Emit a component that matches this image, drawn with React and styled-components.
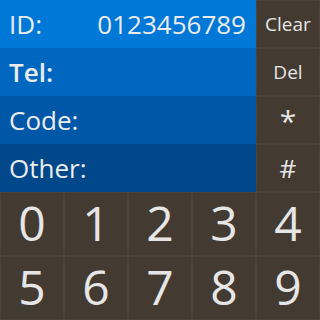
import React from "react";
import styled, { createGlobalStyle } from "styled-components";

const Global = createGlobalStyle`
  html, body { margin: 0; padding: 0; background: #433a31; }
  body { font-family: "Open Sans", "Noto Sans", sans-serif; }
`;

const Screen = styled.div`
  width: 320px;
  height: 320px;
  display: grid;
  grid-template-columns: 256px 64px;
  grid-template-rows: 192px 128px;
  background: #433a31;
  overflow: hidden;
`;

const Fields = styled.div`
  display: flex;
  flex-direction: column;
`;

const Field = styled.div`
  height: 48px;
  display: flex;
  align-items: center;
  justify-content: space-between;
  padding: 0 10px 0 9px;
  background: ${(p) => p.$bg};
  color: #ececec;
  font-size: 26px;
  font-weight: ${(p) => (p.$bold ? 600 : 400)};
  box-sizing: border-box;
`;

const Side = styled.div`
  display: flex;
  flex-direction: column;
`;

const Key = styled.div`
  box-sizing: border-box;
  border: 1px solid #4e443a;
  background: #433a31;
  color: #e6e6e6;
  display: flex;
  align-items: center;
  justify-content: center;
  font-size: ${(p) => p.$size || 48}px;
  height: ${(p) => p.$h || 64}px;
  padding-bottom: ${(p) => p.$lift || 0}px;
`;

const Pad = styled.div`
  grid-column: 1 / 3;
  display: grid;
  grid-template-columns: repeat(5, 64px);
  grid-template-rows: repeat(2, 64px);
`;

const fields = [
  { label: "ID:", value: "0123456789", bg: "#0078d7" },
  { label: "Tel:", value: "", bg: "#0067c0", bold: true },
  { label: "Code:", value: "", bg: "#0057a8" },
  { label: "Other:", value: "", bg: "#00488a" },
];

const side = [
  { t: "Clear", s: 19 },
  { t: "Del", s: 19 },
  { t: "*", s: 30 },
  { t: "#", s: 26 },
];

export default function App() {
  return (
    <>
      <Global />
      <Screen>
        <Fields>
          {fields.map((f) => (
            <Field key={f.label} $bg={f.bg} $bold={f.bold}>
              <span>{f.label}</span>
              <span>{f.value}</span>
            </Field>
          ))}
        </Fields>
        <Side>
          {side.map((k) => (
            <Key key={k.t} $h={48} $size={k.s}>
              {k.t}
            </Key>
          ))}
        </Side>
        <Pad>
          {"0123456789".split("").map((d) => (
            <Key key={d} $lift={4}>
              {d}
            </Key>
          ))}
        </Pad>
      </Screen>
    </>
  );
}
